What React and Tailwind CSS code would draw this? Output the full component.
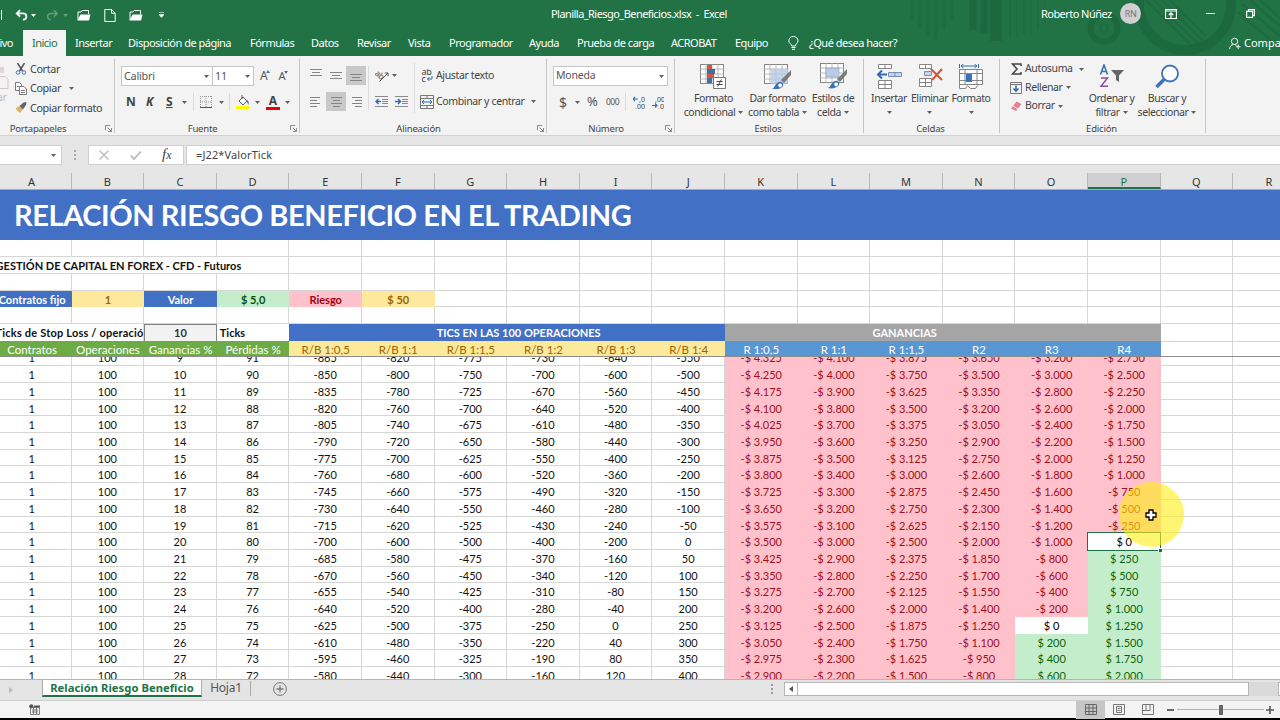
import clsx from 'clsx';

const UI = "font-['Noto_Sans','Open_Sans',sans-serif]";
const SHEET = "font-['Lato',sans-serif]";

const tabs = [
  { label: 'Insertar', box: 'w-[34px] ml-[9px]' },
  { label: 'Disposición de página', box: 'w-[103px] ml-[19px]' },
  { label: 'Fórmulas', box: 'w-[43px] ml-[19px]' },
  { label: 'Datos', box: 'w-[28px] ml-[18px]' },
  { label: 'Revisar', box: 'w-[33px] ml-[18px]' },
  { label: 'Vista', box: 'w-[23px] ml-[18px]' },
  { label: 'Programador', box: 'w-[62px] ml-[18px]' },
  { label: 'Ayuda', box: 'w-[29px] ml-[18px]' },
  { label: 'Prueba de carga', box: 'w-[76px] ml-[19px]' },
  { label: 'ACROBAT', box: 'w-[46px] ml-[18px]' },
  { label: 'Equipo', box: 'w-[33px] ml-[18px]' },
];

const letters = 'ABCDEFGHIJKLMNOPQR'.split('');
const ratios = [0.5, 1, 1.5, 2, 3, 4];
const tickHeads = ['R/B 1:0,5', 'R/B 1:1', 'R/B 1:1,5', 'R/B 1:2', 'R/B 1:3', 'R/B 1:4'];
const gainHeads = ['R 1:0,5', 'R 1:1', 'R 1:1,5', 'R2', 'R3', 'R4'];

const rows = Array.from({ length: 20 }, (_, i) => {
  const wins = i + 9;
  const losses = 100 - wins;
  const ticks = ratios.map((r) => wins * 10 * r - losses * 10);
  return { wins, losses, ticks, gains: ticks.map((t) => t * 5) };
});

const money = (n) => {
  const digits = String(Math.abs(n)).replace(/\B(?=(\d{3})+$)/g, '.');
  return `${n < 0 ? '-' : ''}$ ${digits}`;
};

const GRID = 'grid grid-cols-[79px_repeat(17,72.6px)] w-[1313.2px] -ml-[7.4px]';

function Caret({ className }) {
  return (
    <svg viewBox="0 0 5 3" className={clsx('w-[5px] h-[3px] shrink-0', className)}>
      <path d="M0 0h5L2.5 3z" fill="#606060" />
    </svg>
  );
}

function Launcher() {
  return (
    <svg viewBox="0 0 8 8" className="w-[7px] h-[7px] shrink-0 mb-px" fill="none" stroke="#777">
      <path d="M.5 6V.5H6M3 3l4 4M7.5 3.5v4h-4" />
    </svg>
  );
}

function Group({ width, label, launcher, labelClass, children }) {
  return (
    <div className={clsx('h-[79px] shrink-0 flex flex-col pt-[2px] relative', width)}>
      <div className="h-[65px] flex">{children}</div>
      <div className="h-[12px] flex items-center justify-end pr-[3px]">
        <div className={clsx('flex-1 text-center text-[9.5px] leading-3 tracking-[-0.02em] text-[#444]', labelClass)}>{label}</div>
        {launcher && <Launcher />}
      </div>
      <div className="absolute right-0 top-[3px] h-[74px] w-px bg-[#c4c4c4]" />
    </div>
  );
}

function BigButton({ width, icon, first, second, caretOnly }) {
  return (
    <div className={clsx('flex flex-col items-center shrink-0 pt-[5px] whitespace-nowrap text-[10.5px] leading-[14px] tracking-[-0.04em]', width)}>
      <div className="h-[27px] flex items-center justify-center">{icon}</div>
      <div className="mt-[1px]">{first}</div>
      <div className="flex items-center h-[14px] gap-[3px]">
        {!caretOnly && second}
        <Caret className="mt-px" />
      </div>
    </div>
  );
}

function Lines({ widths, align = 'items-center' }) {
  return (
    <span className={clsx('flex flex-col gap-[2px] w-[12px]', align)}>
      {widths.map((w, i) => (
        <i key={i} className={clsx('h-px bg-[#858585]', w)} />
      ))}
    </span>
  );
}

function GridIcon({ children, w = 24, h = 20 }) {
  return (
    <g>
      <rect x=".5" y=".5" width={w - 1} height={h - 1} fill="#fff" stroke="#858585" />
      <path
        d={`M0 ${h / 4}h${w}M0 ${h / 2}h${w}M0 ${(h * 3) / 4}h${w}M${w / 4} 0v${h}M${w / 2} 0v${h}M${(w * 3) / 4} 0v${h}`}
        stroke="#a9a9a9"
        strokeWidth=".8"
      />
      {children}
    </g>
  );
}

function Brush() {
  return (
    <g>
      <path d="M27 6v5l-7 8-3-3z" fill="#7b7b7b" />
      <path d="M8 25c3-1 3-6 7-7 3-1 5 2 4 4-2 3-7 4-11 3z" fill="#3b73b9" />
      <path d="M14 21c1-2 4-2 4 0s-2 3-3 2z" fill="#fff" />
    </g>
  );
}

function Folder() {
  return (
    <svg viewBox="0 0 14 12" className="w-[14px] h-[12px] shrink-0">
      <path d="M1 11V3h3l1-1.500h6.500V5" fill="none" stroke="#fff" />
      <path d="M.5 11.500 3.500 5.500H13.500L12 11.500z" fill="#fff" />
    </svg>
  );
}

function TitleBar() {
  return (
    <div className="h-[30px] flex items-center text-white text-[11px] tracking-[-0.05em] relative *:shrink-0">
      <div className="w-[2px] h-[10px] border-r border-white mr-[13px]" />
      <svg viewBox="0 0 14 12" className="w-[13px] h-[12px]" fill="none" stroke="#fff" strokeWidth="1.9">
        <path d="M5.5.8 1.8 4.3l3.7 3.5M2 4.3h6.5c5 0 5 6.7 0 6.7" />
      </svg>
      <svg viewBox="0 0 5 3" className="w-[5px] h-[3px] ml-[3px]"><path d="M0 0h5L2.5 3z" fill="#fff" /></svg>
      <svg viewBox="0 0 14 12" className="w-[13px] h-[12px] ml-[10px] opacity-30" fill="none" stroke="#fff" strokeWidth="1.6">
        <path d="M8.5.8l3.700 3.500-3.700 3.500M12 4.300H5.500c-5 0-5 6.700 0 6.700" />
      </svg>
      <svg viewBox="0 0 5 3" className="w-[5px] h-[3px] ml-[4px] opacity-30"><path d="M0 0h5L2.5 3z" fill="#fff" /></svg>
      <div className="ml-[9px] flex items-center">
        <Folder />
        <svg viewBox="0 0 12 13" className="w-[12px] h-[13px] ml-[13px]" fill="none" stroke="#fff">
          <path d="M.8.500h6.700l3.700 3.700v8.300H.8zM7.500.500v3.700h3.700" />
        </svg>
        <div className="ml-[13px]"><Folder /></div>
      </div>
      <svg viewBox="0 0 5 6" className="w-[5px] h-[6px] ml-[16px]"><path d="M0 .5h5M0 2.500h5L2.500 5.500z" fill="#fff" stroke="#fff" strokeWidth=".6" /></svg>
      <div className="ml-[387px] w-[180px] whitespace-pre -mt-[2px]">Planilla_Riesgo_Beneficios.xlsx  -  Excel</div>
      <div className="ml-[310px] w-[72px] whitespace-nowrap -mt-[2px]">Roberto Núñez</div>
      <div className="ml-[7px] w-[21px] h-[21px] -mt-[3px] rounded-full bg-[#d2cfd0] text-[#777] text-[9px] flex items-center justify-center">RN</div>
      <svg viewBox="0 0 12 10" className="w-[12px] h-[10px] ml-[24px] -mt-[3px]" fill="none" stroke="#fff">
        <path d="M.5.500h11v9H.500zM0 2h12M6 9V4M3.800 6 6 3.900 8.200 6" strokeWidth="1.200" />
      </svg>
      <div className="w-[9px] h-px bg-white ml-[29px] -mt-[3px]" />
      <svg viewBox="0 0 10 10" className="w-[9px] h-[9px] ml-[31px] -mt-[3px]" fill="none" stroke="#fff" strokeWidth="1.300">
        <path d="M.7 2.700h6.600v6.600H.7zM2.700 2.700v-2h6.600v6.600h-2" />
      </svg>
    </div>
  );
}

function TitleArt() {
  return (
    <svg viewBox="0 0 380 56" className="absolute right-0 top-0 w-[380px] h-[56px]" fill="none" stroke="#1c653d">
      <g strokeWidth="3" opacity=".45">
        <path d="M12 0v20M20 0v28M28 0v36M36 0v40M44 0v30M52 0v20" />
        <path d="M110 0v38M117 0v38M124 0v36M131 0v34M138 0v30M145 0v24" strokeWidth="2" />
      </g>
      <g opacity=".7">
        <path d="M73 0v30M84 0v34" strokeWidth="7" />
        <path d="M96 0v41" strokeWidth="12" />
      </g>
      <circle cx="204" cy="28" r="13.500" strokeWidth="6" opacity=".8" />
      <circle cx="204" cy="28" r="4" strokeWidth="3" opacity=".4" />
      <circle cx="285" cy="4" r="46" strokeWidth="10" opacity=".75" />
      <g strokeWidth="2.500" opacity=".55">
        <path d="M246 0l46 46M254 0l44 44M262 0l40 40M270 0l36 36" />
        <path d="M350 0l30 26M360 0l20 18M342 4l38 32M338 12l42 36" />
      </g>
    </svg>
  );
}

function TabStrip() {
  return (
    <div className="h-[26px] flex items-center text-white text-[11px] tracking-[-0.045em] whitespace-nowrap relative *:shrink-0">
      <div className="w-[23px] flex justify-end pr-[10px]"><span>Archivo</span></div>
      <div className="w-[43px] h-full bg-[#f3f3f3] text-[#217346] flex items-center justify-center">Inicio</div>
      {tabs.map((t) => (
        <div key={t.label} className={t.box}>{t.label}</div>
      ))}
      <svg viewBox="0 0 11 14" className="w-[11px] h-[14px] ml-[20px]" fill="none" stroke="#fff">
        <path d="M3.500 10C3.500 7.500.8 7.500.8 4.800a4.500 4.300 0 0 1 9.200 0C10 7.500 7.500 7.500 7.500 10zM3.500 11.500h4M4 13.300h3" />
      </svg>
      <div className="ml-[10px] w-[86px]">¿Qué desea hacer?</div>
      <svg viewBox="0 0 13 13" className="w-[12px] h-[13px] ml-[334px]" fill="none" stroke="#fff">
        <path d="M.8 12.500c0-3 1.500-4.500 4-5M6 .800a3.400 3.400 0 1 1 0 6.800 3.400 3.400 0 0 1 0-6.800M6 7.600l2 1M10 7.500v5M7.500 10h5" />
      </svg>
      <div className="ml-[3px] tracking-normal">Compartir</div>
    </div>
  );
}

function Clipboard() {
  const row = 'flex items-center h-[19.5px]';
  return (
    <>
      <div className="w-[15px] pt-[8px] shrink-0 overflow-hidden flex flex-col items-start">
        <svg viewBox="0 0 9 24" className="w-[9px] h-[24px]" fill="none" stroke="#cfc3cc">
          <path d="M0 1h4v6H0z" fill="#ddd5da" stroke="none" />
          <path d="M0 10.500h5l3 3v9H0" />
        </svg>
        <span className="w-[7px] h-[14px] text-[10px] text-[#bbb] flex justify-end leading-[14px]"><span>Pegar</span></span>
      </div>
      <div className="pt-[1px] text-[10.8px] tracking-[-0.035em] whitespace-nowrap">
        <div className={row}>
          <svg viewBox="0 0 11 12" className="w-[12px] h-[12px] mr-[3px]" fill="none">
            <path d="M2 0l5 8M9 0 4 8" stroke="#555" strokeWidth="1.500" />
            <circle cx="2.500" cy="9.500" r="1.800" stroke="#4a78b5" />
            <circle cx="8.500" cy="9.500" r="1.800" stroke="#4a78b5" />
          </svg>
          Cortar
        </div>
        <div className={row}>
          <svg viewBox="0 0 12 13" className="w-[12px] h-[13px] mr-[3px]" fill="#fff" stroke="#777">
            <path d="M.5.500h4l2 2v6h-6z" />
            <path d="M4.500 4.500h4.500l2.500 2.500v5.500h-7zM6 8.500h4M6 10.500h4M2 4.500h2" />
          </svg>
          Copiar <Caret className="ml-[8px]" />
        </div>
        <div className={row}>
          <svg viewBox="0 0 12 11" className="w-[12px] h-[11px] mr-[3px]">
            <path d="M1 6l4-2 3 3-3 4C3 10 1 8 1 6z" fill="#e5b063" />
            <path d="M4.500 4 8.500.5 11.500 0l-.5 3L8 7.500z" fill="#666" />
          </svg>
          Copiar formato
        </div>
      </div>
    </>
  );
}

function FontGroup() {
  return (
    <div className="pt-[8px] pl-[6px]">
      <div className="flex items-center text-[10.8px] tracking-[-0.02em] text-[#555]">
        <div className="w-[92px] h-[20px] bg-white border border-[#c6c6c6] flex items-center justify-between pl-[2px] pr-[3px]">Calibri<Caret /></div>
        <div className="w-[41px] h-[20px] bg-white border border-l-0 border-[#c6c6c6] flex items-center justify-between pl-[2px] pr-[3px]">11<Caret /></div>
        <div className="ml-[6px] text-[12px] flex">A<svg viewBox="0 0 4 3" className="w-[4px] h-[3px] mt-[3px] -ml-px"><path d="M0 3h4L2 0z" fill="#3b73b9" /></svg></div>
        <div className="ml-[8px] text-[11px] flex">A<svg viewBox="0 0 4 3" className="w-[4px] h-[3px] mt-[3px] -ml-px"><path d="M0 0h4L2 3z" fill="#3b73b9" /></svg></div>
      </div>
      <div className="flex items-center h-[20px] mt-[6px] text-[12px] font-bold text-[#444]">
        <span className="w-[20px] pl-[5px]">N</span>
        <span className="w-[20px] pl-[5px] italic">K</span>
        <span className="w-[18px] pl-[5px] underline">S</span>
        <Caret className="ml-[3px]" />
        <i className="w-px h-[18px] bg-[#dcdcdc] ml-[6px]" />
        <svg viewBox="0 0 12 12" className="w-[12px] h-[12px] ml-[6px]" fill="none" stroke="#999" strokeDasharray="1 1">
          <path d="M0 .5h12M.5 0v12M11.500 0v12M6 0v12M0 6h12" />
          <path d="M0 11.500h12" stroke="#555" strokeDasharray="none" />
        </svg>
        <Caret className="ml-[7px]" />
        <i className="w-px h-[18px] bg-[#dcdcdc] ml-[5px]" />
        <svg viewBox="0 0 14 14" className="w-[14px] h-[14px] ml-[6px]">
          <path d="M3 6l4-4 4 4-4 4zM6 4V0" fill="#fff" stroke="#555" />
          <path d="M11 5c2 1 2 3 1.500 5-1-2-1-3-2.500-4z" fill="#3b73b9" />
          <path d="M0 11h14v3H0z" fill="#ff0" />
        </svg>
        <Caret className="ml-[5px]" />
        <span className="ml-[6px] w-[14px] flex flex-col items-center leading-[12px]">
          A
          <i className="h-[3px] w-[14px] bg-[#f00000]" />
        </span>
        <Caret className="ml-[5px]" />
      </div>
    </div>
  );
}

function AlignButton({ active, children }) {
  return <div className={clsx('w-[20px] h-[19px] flex items-center justify-center', active && 'bg-[#c8c8c8]')}>{children}</div>;
}

function Indent({ flip }) {
  return (
    <svg viewBox="0 0 13 11" className="w-[13px] h-[11px]" fill="none">
      <path d="M0 .5h13M7 3.500h6M7 5.500h6M7 7.500h6M0 10.500h13" stroke="#8a8a8a" />
      <path d={flip ? 'M0 5.500h5M3 3l2.500 2.500L3 8' : 'M6 5.500H1M3.500 3 1 5.500 3.500 8'} stroke="#2f6cb3" strokeWidth="1.500" />
    </svg>
  );
}

function Alignment() {
  return (
    <div className="flex whitespace-nowrap text-[10.5px] tracking-[-0.035em]">
      <div className="pt-[8px] pl-[6px] flex flex-col gap-[7px]">
        <div className="flex">
          <AlignButton><span className="-mt-[6px]"><Lines widths={['w-[12px]', 'w-[8px]', 'w-[12px]']} /></span></AlignButton>
          <AlignButton><Lines widths={['w-[12px]', 'w-[8px]', 'w-[12px]']} /></AlignButton>
          <AlignButton active><span className="mt-[4px]"><Lines widths={['w-[12px]', 'w-[8px]', 'w-[12px]']} /></span></AlignButton>
        </div>
        <div className="flex">
          <AlignButton><Lines align="items-start" widths={['w-[10px]', 'w-[7px]', 'w-[10px]', 'w-[7px]']} /></AlignButton>
          <AlignButton active><Lines widths={['w-[11px]', 'w-[7px]', 'w-[11px]', 'w-[7px]']} /></AlignButton>
          <AlignButton><Lines align="items-end" widths={['w-[10px]', 'w-[7px]', 'w-[10px]', 'w-[7px]']} /></AlignButton>
        </div>
      </div>
      <i className="w-px h-[44px] bg-[#dcdcdc] mt-[8px] ml-[2px]" />
      <div className="pt-[8px] pl-[6px] flex flex-col gap-[7px] w-[45px]">
        <div className="flex items-center h-[19px]">
          <svg viewBox="0 0 14 13" className="w-[14px] h-[13px]" fill="none" stroke="#555">
            <path d="M4.500 12.500 13 4M9.800 4H13v3.200" />
            <text x="0" y="7" fontSize="8.500" fill="#555" stroke="none" transform="rotate(40 2 5)">ab</text>
          </svg>
          <Caret className="ml-[3px]" />
        </div>
        <div className="flex items-center h-[19px] gap-[7px]">
          <Indent />
          <Indent flip />
        </div>
      </div>
      <i className="w-px h-[50px] bg-[#dcdcdc] mt-[5px]" />
      <div className="pt-[8px] pl-[5px] flex flex-col gap-[7px]">
        <div className="flex items-center h-[19px]">
          <svg viewBox="0 0 13 13" className="w-[14px] h-[13px] mr-[2px]" fill="none">
            <text x="1" y="6" fontSize="9" fill="#444">ab</text>
            <text x="1" y="12.500" fontSize="9" fill="#444">c</text>
            <path d="M11.500 7v3H7M9 8 7 10l2 2" stroke="#2f6cb3" />
          </svg>
          Ajustar texto
        </div>
        <div className="flex items-center h-[19px]">
          <svg viewBox="0 0 14 14" className="w-[14px] h-[14px] mr-[2px]" fill="none" stroke="#777">
            <path d="M.5.500h13v13H.500zM.5 3.500h13M.5 10.500h13M7 0v3.500M7 10.500V14" />
            <path d="M2 7h10M4 5 2 7l2 2M10 5l2 2-2 2" stroke="#2f6cb3" />
          </svg>
          <span className="w-[89px]">Combinar y centrar</span>
          <Caret className="ml-[6px]" />
        </div>
      </div>
    </div>
  );
}

function Decimals({ flip }) {
  return (
    <svg viewBox="0 0 12 13" className="w-[12px] h-[13px]" fill="none">
      <text x={flip ? 3 : 6} y="6" fontSize="7" fill="#444">{flip ? ',00' : ',0'}</text>
      <text x={flip ? 6 : 2} y="12.500" fontSize="7" fill="#444">{flip ? ',0' : ',00'}</text>
      <path d={flip ? 'M0 9.500h5M3 7.500l2 2-2 2' : 'M5 3H0M2 1 0 3l2 2'} stroke="#2f6cb3" strokeWidth="1.200" />
    </svg>
  );
}

function NumberGroup() {
  return (
    <div className="pt-[8px] pl-[6px] text-[#555]">
      <div className="w-[115px] h-[20px] bg-white border border-[#c6c6c6] flex items-center justify-between pl-[2px] pr-[3px] text-[10.5px] tracking-[-0.02em]">
        Moneda<Caret />
      </div>
      <div className="flex items-center h-[20px] mt-[6px]">
        <span className="w-[19px] pl-[6px] text-[14px]">$</span>
        <Caret className="ml-[3px]" />
        <span className="ml-[7px] w-[19px] text-[13px]">%</span>
        <span className="w-[19px] text-[8.5px] tracking-[-0.06em]">000</span>
        <i className="w-px h-[18px] bg-[#dcdcdc]" />
        <span className="ml-[7px]"><Decimals /></span>
        <span className="ml-[7px]"><Decimals flip /></span>
      </div>
    </div>
  );
}

function Styles() {
  return (
    <div className="flex pl-[7px]">
      <BigButton
        width="w-[63px]"
        first="Formato"
        second="condicional"
        icon={
          <svg viewBox="0 0 27 25" className="w-[27px] h-[25px]" fill="none">
            <GridIcon>
              <path d="M7 1h5v4H7zM7 10h7v4H7z" fill="#d0573a" />
              <path d="M7 5h8v5H7zM7 14h5v5H7z" fill="#3f6ea8" />
            </GridIcon>
            <path d="M13.500 13.500h12v11h-12z" fill="#fff" stroke="#777" />
            <path d="M16.500 17.500h6M16.500 20.500h6M21.500 15.500l-4 7" stroke="#444" />
          </svg>
        }
      />
      <BigButton
        width="w-[65px]"
        first="Dar formato"
        second="como tabla"
        icon={
          <svg viewBox="0 0 27 25" className="w-[27px] h-[25px]" fill="none">
            <GridIcon>
              <path d="M7 5h17v15H7z" fill="#b9cbe6" opacity=".8" />
            </GridIcon>
            <Brush />
          </svg>
        }
      />
      <BigButton
        width="w-[46px]"
        first="Estilos de"
        second="celda"
        icon={
          <svg viewBox="0 0 27 26" className="w-[27px] h-[26px] -mt-[2px]" fill="none">
            <GridIcon>
              <path d="M6 5h13v9H6z" fill="#b9cbe6" stroke="#8a9bb5" strokeWidth=".6" />
            </GridIcon>
            <Brush />
          </svg>
        }
      />
    </div>
  );
}

function Cells() {
  return (
    <div className="flex pl-[5px]">
      <BigButton
        width="w-[40px]"
        caretOnly
        first="Insertar"
        icon={
          <svg viewBox="0 0 26 25" className="w-[26px] h-[25px]" fill="#fff" stroke="#858585">
            <path d="M2.500.500h13v4h-13zM9 .500v4M2.500 16.500h13v8h-13zM9 16.500v8M2.500 20.500h13" />
            <path d="M12.500 8.500h13v4h-13zM19 8.500v4" fill="#c5d4ea" stroke="#7890b0" />
            <path d="M11 10.500H2M6 6.500l-4 4 4 4" fill="none" stroke="#2f6cb3" strokeWidth="2" />
          </svg>
        }
      />
      <BigButton
        width="w-[41px]"
        caretOnly
        first="Eliminar"
        icon={
          <svg viewBox="0 0 26 25" className="w-[26px] h-[25px]" fill="#fff" stroke="#858585">
            <path d="M2.500.500h12v4h-12zM8.500 .500v4M2.500 14.500h12v8h-12zM8.500 14.500v8M2.500 18.500h12" />
            <path d="M7.500 7.500h7v4h-7z" fill="#c5d4ea" stroke="#7890b0" />
            <path d="M14 5l11 11M25 5 15 16" stroke="#d9532c" strokeWidth="2" />
          </svg>
        }
      />
      <BigButton
        width="w-[42px]"
        caretOnly
        first="Formato"
        icon={
          <svg viewBox="0 0 26 26" className="w-[26px] h-[26px]" fill="#fff" stroke="#858585">
            <path d="M1.500 5.500h23v15h-23zM7 5.500v15M19 5.500v15M1.500 9.500h23M1.500 16.500h23M1.500 20.500v4h6l2-3 3 3h5l2-3" />
            <path d="M8 10h6v8H8z" fill="#3b73b9" stroke="none" />
            <path d="M3 2h16M5.500 0l-2.500 2 2.500 2M16.500 0 19 2l-2.500 2M1.500 0v4M20.500 0v4" fill="none" stroke="#2f6cb3" />
          </svg>
        }
      />
    </div>
  );
}

function Editing() {
  const row = 'flex items-center h-[18.5px]';
  return (
    <div className="flex">
      <div className="pl-[11px] pt-[2px] w-[88px] text-[10.5px] tracking-[-0.035em] whitespace-nowrap">
        <div className={row}>
          <svg viewBox="0 0 11 12" className="w-[11px] h-[12px] mr-[3px]" fill="none" stroke="#444" strokeWidth="1.500">
            <path d="M10 3V1H1.500L6 6l-4.500 5H10V9" />
          </svg>
          <span className="w-[47px]">Autosuma</span>
          <Caret className="ml-[7px]" />
        </div>
        <div className={row}>
          <svg viewBox="0 0 12 12" className="w-[12px] h-[12px] -ml-px mr-[3px]" fill="none" stroke="#777">
            <path d="M.5.500h11v11H.500zM.5 2.500h11" />
            <path d="M6 3.500V9M3.500 6.500 6 9l2.500-2.500" stroke="#2f6cb3" strokeWidth="1.600" />
          </svg>
          Rellenar<Caret className="ml-[3px]" />
        </div>
        <div className={row}>
          <svg viewBox="0 0 12 11" className="w-[12px] h-[11px] -ml-px mr-[3px]">
            <path d="M6.500.500 11.500 3 6 10 1 7.500z" fill="#e57f92" />
            <path d="M3 5l5 3" stroke="#fff" strokeWidth=".8" />
          </svg>
          Borrar<Caret className="ml-[3px]" />
        </div>
      </div>
      <BigButton
        width="w-[47px]"
        first="Ordenar y"
        second="filtrar"
        icon={
          <svg viewBox="0 0 25 25" className="w-[25px] h-[25px]">
            <path d="M1.500 10.500 5 1l3.500 9.500M2.500 7.500h5" fill="none" stroke="#3b73b9" strokeWidth="1.600" />
            <path d="M2 14h6.500L2 22.300h7" fill="none" stroke="#8a4fa5" strokeWidth="1.500" />
            <path d="M12 6h13l-5 5.500V18l-3-2v-4.500z" fill="#666" />
          </svg>
        }
      />
      <BigButton
        width="w-[64px]"
        first="Buscar y"
        second="seleccionar"
        icon={
          <svg viewBox="0 0 26 25" className="w-[26px] h-[25px]" fill="none" stroke="#3b73b9">
            <circle cx="16" cy="9.500" r="8" fill="#fff" strokeWidth="1.800" />
            <path d="M10 15.500 2.500 23" strokeWidth="3.500" />
          </svg>
        }
      />
    </div>
  );
}

function FormulaBar() {
  return (
    <div className="h-[35px] pt-[9px] bg-[#e6e6e6] border-t border-[#d2d2d2] flex items-start text-[#444]">
      <div className="w-[63px] h-[20px] -ml-px bg-white border border-[#cfcfcf] flex items-center justify-end pr-[5px]"><Caret /></div>
      <div className="w-[26px] h-[20px] flex flex-col gap-[2px] items-center justify-center">
        {[0, 1, 2].map((i) => <i key={i} className="w-[2px] h-[2px] bg-[#aaa]" />)}
      </div>
      <div className="w-[96px] h-[20px] bg-white border border-[#cfcfcf] flex items-center">
        <svg viewBox="0 0 10 10" className="w-[10px] h-[10px] ml-[10px]" stroke="#bbb" strokeWidth="1.400"><path d="M.5.500l9 9M9.500.500l-9 9" /></svg>
        <svg viewBox="0 0 12 9" className="w-[12px] h-[9px] ml-[21px]" fill="none" stroke="#bbb" strokeWidth="1.800"><path d="M.8 4.500 4 8l7-7.500" /></svg>
        <span className="ml-[20px] -mt-px font-['Liberation_Serif',serif] italic text-[15px] leading-4 text-[#444]">f<span className="text-[12px]">x</span></span>
      </div>
      <div className="ml-[2px] flex-1 h-[20px] bg-white border border-r-0 border-[#cfcfcf] flex items-center pl-[9px] text-[11px] tracking-[0.01em]">=J22*ValorTick</div>
    </div>
  );
}

const rowBase = `${GRID} h-[16.72px] shrink-0`;
const cell = 'border-r border-b border-[#d6d6d6] text-center whitespace-nowrap overflow-hidden leading-[17px]';
const solid = 'text-center whitespace-nowrap overflow-hidden leading-[17px]';

function Empty({ count }) {
  return Array.from({ length: count }, (_, i) => <div key={i} className={cell} />);
}

function gainClass(n) {
  if (n < 0) return 'bg-[#ffc1cb] text-[#9c1020]';
  if (n > 0) return 'bg-[#c4eecb] text-[#0a640a]';
  return 'bg-white text-black';
}

function FrozenRows() {
  return (
    <div className="shrink-0 relative">
      <div className="h-[50.4px] bg-[#4170c4] text-white font-bold text-[29px] leading-[50px] pl-[14px] whitespace-nowrap tracking-[-0.41px]">
        RELACIÓN RIESGO BENEFICIO EN EL TRADING
      </div>
      <div className={rowBase}><Empty count={18} /></div>
      <div className={rowBase}>
        <div className={clsx(cell, 'col-span-4 text-left font-bold pl-[3px]')}>GESTIÓN DE CAPITAL EN FOREX - CFD - Futuros</div>
        <Empty count={14} />
      </div>
      <div className={rowBase}><Empty count={18} /></div>
      <div className={clsx(rowBase, 'font-bold')}>
        <div className={clsx(solid, 'bg-[#4170c4] text-white')}>Contratos fijo</div>
        <div className={clsx(solid, 'bg-[#fde99b] text-[#9c6500]')}>1</div>
        <div className={clsx(solid, 'bg-[#4170c4] text-white')}>Valor</div>
        <div className={clsx(solid, 'bg-[#c4eecb] text-[#0a500a]')}>$ 5,0</div>
        <div className={clsx(solid, 'bg-[#ffc1cb] text-[#9c0010]')}>Riesgo</div>
        <div className={clsx(solid, 'bg-[#fde99b] text-[#9c6500]')}>$ 50</div>
        <Empty count={12} />
      </div>
      <div className={rowBase}><Empty count={18} /></div>
      <div className={clsx(rowBase, 'font-bold')}>
        <div className={clsx(cell, 'col-span-2 text-left pl-[3px] tracking-[0.018em]')}>Ticks de Stop Loss / operación</div>
        <div className="border border-[#7f7f7f] bg-[#f2f2f2] text-[#333] text-center leading-[16px]">10</div>
        <div className={clsx(solid, 'text-left pl-[3px]')}>Ticks</div>
        <div className={clsx(solid, 'col-span-6 bg-[#4170c4] text-white pl-[23px]')}>TICS EN LAS 100 OPERACIONES</div>
        <div className={clsx(solid, 'col-span-6 bg-[#a5a5a5] text-white pr-[76px]')}>GANANCIAS</div>
        <Empty count={2} />
      </div>
      <div className={clsx(rowBase, 'border-b border-[#8c8c8c] text-[11.5px]')}>
        {['Contratos', 'Operaciones', 'Ganancias %', 'Pérdidas %'].map((h) => (
          <div key={h} className={clsx(solid, 'bg-[#6dac45] text-white')}>{h}</div>
        ))}
        {tickHeads.map((h) => <div key={h} className={clsx(solid, 'bg-[#fde99b] text-[#9c6500]')}>{h}</div>)}
        {gainHeads.map((h) => <div key={h} className={clsx(solid, 'bg-[#5897d4] text-white')}>{h}</div>)}
        <div className="border-r border-[#d6d6d6]" />
        <div />
      </div>
    </div>
  );
}

function DataRows() {
  return (
    <div className="flex-1 overflow-hidden relative">
      <div className="-mt-[8px]">
        {rows.map((r) => (
          <div key={r.wins} className={rowBase}>
            {[1, 100, r.wins, r.losses, ...r.ticks].map((v, i) => (
              <div key={i} className={cell}>{v}</div>
            ))}
            {r.gains.map((g, i) => (
              <div key={i} className={clsx(solid, gainClass(g))}>{money(g)}</div>
            ))}
            <Empty count={2} />
          </div>
        ))}
      </div>
      {/* selected cell P22 */}
      <div className="absolute left-[1087px] top-[175px] w-[74px] h-[19px] border-[1.5px] border-[#1f7145]">
        <i className="absolute -right-[2px] -bottom-[2px] w-[4px] h-[4px] bg-[#1f7145] border-l border-t border-white" />
      </div>
      {/* pointer highlight */}
      <div className="absolute left-[1119px] top-[125px] w-[65px] h-[65px] rounded-full bg-[#ffee14]/60" />
      <svg viewBox="0 0 12 12" className="absolute left-[1145px] top-[152px] w-[12px] h-[12px]">
        <path d="M4 1h4v3h3v4H8v3H4V8H1V4h3z" fill="#fff" stroke="#000" strokeWidth="1.300" />
      </svg>
    </div>
  );
}

function ColumnHeads() {
  return (
    <div className={clsx(GRID, 'h-[20px] shrink-0 pt-[3px] bg-[#e6e6e6] border-b border-[#ababab] text-[11px] text-[#333]', UI)}>
      {letters.map((l) => (
        <div
          key={l}
          className={clsx('h-[16px] leading-[17px] text-center border-r', l === 'P' ? 'bg-[#d0d0d0] text-[#217346] border-[#b5b5b5] border-b-2 border-b-[#217346]' : 'border-[#b9b9b9]')}
        >
          {l}
        </div>
      ))}
    </div>
  );
}

function SheetTabs() {
  return (
    <div className="h-[21px] shrink-0 bg-[#e4e4e4] border-t border-[#b5b5b5] flex items-start text-[12px] whitespace-nowrap overflow-hidden *:shrink-0">
      <svg viewBox="0 0 4 6" className="w-[4px] h-[6px] ml-[9px] mt-[7px]"><path d="M0 0v6l4-3z" fill="#bbb" /></svg>
      <div className="ml-[29px] w-[160px] h-[17px] bg-white border-x border-[#ababab] border-b-2 border-b-[#217346] text-[#217346] font-bold text-[11.2px] tracking-[0.005em] text-center leading-[15px]">
        Relación Riesgo Beneficio
      </div>
      <div className="w-[49px] h-[15px] mt-[1px] text-center leading-[13px] tracking-[-0.02em] text-[#555] border-r border-[#ababab]">Hoja1</div>
      <svg viewBox="0 0 14 14" className="w-[14px] h-[14px] ml-[22px] mt-[2px]" fill="none" stroke="#777">
        <circle cx="7" cy="7" r="6.400" />
        <path d="M7 3.500v7M3.500 7h7" strokeWidth="1.300" />
      </svg>
      <div className="ml-[484px] mt-[4px] flex flex-col gap-[2px]">
        {[0, 1, 2].map((i) => <i key={i} className="w-[2px] h-[2px] bg-[#999]" />)}
      </div>
      <div className="ml-[11px] mt-[2px] w-[14px] h-[14px] bg-white border border-[#b5b5b5] flex items-center justify-center">
        <svg viewBox="0 0 4 6" className="w-[4px] h-[6px]"><path d="M4 0v6L0 3z" fill="#555" /></svg>
      </div>
      <div className="w-[451px] h-[14px] mt-[2px] bg-white border border-l-0 border-[#b5b5b5]" />
      <div className="w-[29px] h-[14px] mt-[2px] bg-[#dadada]" />
      <div className="w-[10px] h-[14px] mt-[2px] bg-white border border-[#b5b5b5]" />
    </div>
  );
}

function StatusBar() {
  return (
    <div className="h-[20px] shrink-0 bg-[#f3f3f3] border-t border-[#cfcfcf] border-b-2 border-b-black flex items-center *:shrink-0">
      <svg viewBox="0 0 11 11" className="w-[11px] h-[11px] ml-[29px]" fill="none" stroke="#666">
        <path d="M1.500 3.500h9v7h-9zM3 6h6M3 8h6M4.500 4v6M7.500 4v6" strokeWidth=".8" />
        <path d="M5 1.500h6v2H5z" fill="#555" stroke="none" />
        <circle cx="2.300" cy="2.300" r="2.100" fill="#555" stroke="none" />
      </svg>
      <div className="ml-auto w-[29px] h-[18px] bg-[#c6c6c6] flex items-center justify-center">
        <svg viewBox="0 0 12 11" className="w-[12px] h-[11px]" fill="none" stroke="#666"><path d="M.5.500h11v10H.500zM.5 4h11M.5 7.500h11M4 .500v10M8 .500v10" /></svg>
      </div>
      <svg viewBox="0 0 12 11" className="w-[12px] h-[11px] ml-[8px]" fill="none" stroke="#777"><path d="M.5.500h11v10H.500zM3.500 2.500h5v6h-5zM4.500 4.500h3M4.500 6.500h3" /></svg>
      <svg viewBox="0 0 12 11" className="w-[12px] h-[11px] ml-[17px]" fill="none" stroke="#777"><path d="M.5.500h11v10H.500zM4 .500v6M8 .500v6H.500" /></svg>
      <i className="w-[7px] h-[2px] bg-[#666] ml-[13px]" />
      <div className="w-[87px] ml-[3px] h-[10px] flex items-center relative">
        <i className="w-full h-px bg-[#b0b0b0]" />
        <i className="absolute left-[42px] top-0 w-[4px] h-[10px] bg-[#666]" />
      </div>
      <svg viewBox="0 0 8 8" className="w-[8px] h-[8px] ml-[2px] mr-[6px]" stroke="#555" strokeWidth="1.600"><path d="M4 0v8M0 4h8" /></svg>
    </div>
  );
}

export default function App() {
  return (
    <div className={clsx('w-[1280px] h-[720px] overflow-hidden bg-white flex flex-col', UI)}>
      <header className="h-[56px] shrink-0 bg-[#217346] relative overflow-hidden">
        <TitleArt />
        <TitleBar />
        <TabStrip />
      </header>
      <div className="h-[79px] shrink-0 bg-[#f3f3f3] flex text-[#444]">
        <Group width="w-[115px]" label="Portapapeles" labelClass="-ml-[29px]" launcher><Clipboard /></Group>
        <Group width="w-[185px]" label="Fuente" launcher><FontGroup /></Group>
        <Group width="w-[247px]" label="Alineación" launcher><Alignment /></Group>
        <Group width="w-[128px]" label="Número" launcher><NumberGroup /></Group>
        <Group width="w-[189px]" label="Estilos"><Styles /></Group>
        <Group width="w-[136px]" label="Celdas"><Cells /></Group>
        <Group width="w-[206px]" label="Edición"><Editing /></Group>
      </div>
      <FormulaBar />
      <ColumnHeads />
      <main className={clsx('h-[489px] shrink-0 flex flex-col overflow-hidden text-[11px] text-[#111]', SHEET)}>
        <FrozenRows />
        <DataRows />
      </main>
      <SheetTabs />
      <StatusBar />
    </div>
  );
}
